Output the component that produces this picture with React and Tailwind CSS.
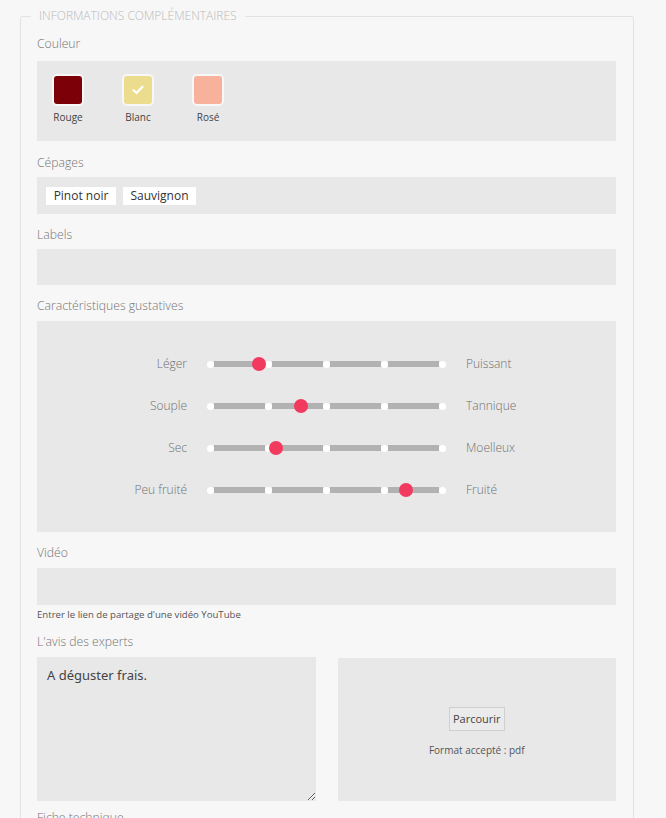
import React from "react";

const font = { fontFamily: "'Open Sans', 'Noto Sans', sans-serif" };

function Label({ children, className = "" }) {
  return (
    <div className={`h-[16px] leading-[16px] text-[12.2px] font-light text-[#757575] ${className}`}>
      {children}
    </div>
  );
}

function Swatch({ color, label, checked }) {
  return (
    <div className="w-[46px] flex flex-col items-center">
      <div
        className={`w-[32px] h-[32px] rounded-[5px] border-2 border-[#f7f7f7] flex items-center justify-center ${color}`}
      >
        {checked && (
          <svg width="12" height="10" viewBox="0 0 12 10">
            <path d="M1.5 5.2 L4.5 8 L10.5 1.8" fill="none" stroke="white" strokeWidth="2.2" strokeLinecap="round" strokeLinejoin="round" />
          </svg>
        )}
      </div>
      <div className="mt-[5px] text-[10px] leading-[12px] text-[#444]">{label}</div>
    </div>
  );
}

function Slider({ left, right, pos }) {
  const segs = [0, 1, 2, 3];
  return (
    <div className="h-[42px] flex items-center">
      <div className="w-[150px] text-right text-[12px] font-light text-[#707070]">{left}</div>
      <div className="relative w-[239px] mx-[20px] h-[14px] flex items-center">
        {segs.map((i) => (
          <React.Fragment key={i}>
            <div className="w-[7px] h-[7px] rounded-full bg-white shrink-0" />
            <div className="flex-1 h-[6px] bg-[#b2b2b2]" />
          </React.Fragment>
        ))}
        <div className="w-[7px] h-[7px] rounded-full bg-white shrink-0" />
        <div
          className="absolute top-0 w-[14px] h-[14px] rounded-full bg-[#f23a5e]"
          style={{ left: pos - 7 }}
        />
      </div>
      <div className="text-[12px] font-light text-[#707070]">{right}</div>
    </div>
  );
}

export default function App() {
  return (
    <div className="min-h-[818px] bg-[#f7f7f7] pt-[9px] pl-[20px]" style={font}>
      <fieldset className="w-[614px] border border-[#e3e3e3] rounded-[2px] pl-[16px] pr-[17px] pb-[20px]">
        <legend className="ml-[-6px] px-[8px] h-[14px] leading-[14px] text-[12px] uppercase text-[#bababa] font-light">
          Informations complémentaires
        </legend>

        <Label className="mt-[13px] mb-[9px]">Couleur</Label>
        <div className="h-[80px] bg-[#e8e8e8] pt-[13px] pl-[8px] flex gap-[24px]">
          <Swatch color="bg-[#7b0008]" label="Rouge" />
          <Swatch color="bg-[#ecdc8e]" label="Blanc" checked />
          <Swatch color="bg-[#f8b29b]" label="Rosé" />
        </div>

        <Label className="mt-[14px] mb-[6px]">Cépages</Label>
        <div className="h-[37px] bg-[#e8e8e8] pt-[10px] pl-[9px] flex gap-[7px] items-start">
          <div className="h-[18px] w-[70px] bg-white flex items-center justify-center text-[12px] text-[#333]">Pinot noir</div>
          <div className="h-[18px] w-[73px] bg-white flex items-center justify-center text-[12px] text-[#333]">Sauvignon</div>
        </div>

        <Label className="mt-[13px] mb-[6px]">Labels</Label>
        <div className="h-[36px] bg-[#e8e8e8]" />

        <Label className="mt-[13px] mb-[7px]">Caractéristiques gustatives</Label>
        <div className="h-[211px] bg-[#e8e8e8] pt-[22px]">
          <Slider left="Léger" right="Puissant" pos={52} />
          <Slider left="Souple" right="Tannique" pos={94} />
          <Slider left="Sec" right="Moelleux" pos={69} />
          <Slider left="Peu fruité" right="Fruité" pos={199} />
        </div>

        <Label className="mt-[13px] mb-[7px]">Vidéo</Label>
        <div className="h-[37px] bg-[#e8e8e8]" />
        <div className="mt-[3px] h-[14px] leading-[14px] text-[9.6px] text-[#555]">
          Entrer le lien de partage d'une vidéo YouTube
        </div>

        <Label className="mt-[12px] mb-[7px]">L'avis des experts</Label>
        <div className="grid grid-cols-2 gap-[22px]">
          <textarea
            defaultValue="A déguster frais."
            className="h-[144px] bg-[#e8e8e8] px-[10px] py-[10px] text-[13px] leading-[16px] text-[#444] outline-none border-0"
            style={{ fontFamily: "'Noto Sans', 'Open Sans', sans-serif" }}
          />
          <div className="h-[143px] mt-[1px] bg-[#e8e8e8] flex flex-col items-center justify-center">
            <div className="mt-[6px] h-[24px] w-[56px] border border-[#d0d0d0] bg-[#ebebeb] flex items-center justify-center text-[11px] text-[#444]">
              Parcourir
            </div>
            <div className="mt-[12px] text-[10px] text-[#555]">Format accepté : pdf</div>
          </div>
        </div>

        <Label className="mt-[9px] mb-[7px]">Fiche technique</Label>
        <div className="h-[60px] bg-[#e8e8e8]" />
      </fieldset>
    </div>
  );
}
